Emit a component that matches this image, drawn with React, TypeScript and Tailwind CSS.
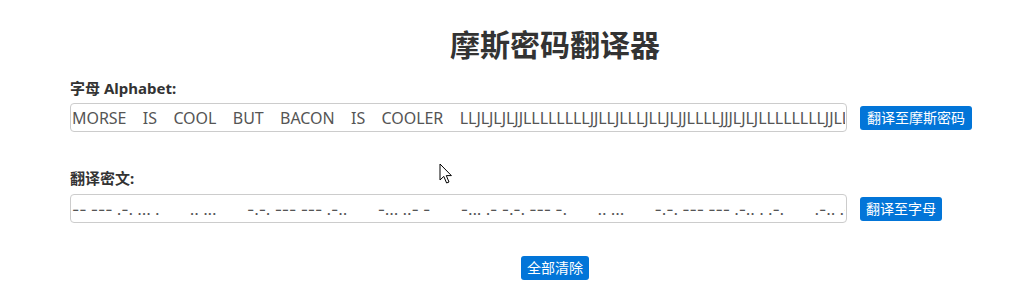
import React, { useState } from 'react';

const LETTERS =
  'MORSE    IS    COOL    BUT    BACON    IS    COOLER    LLJLJLJLJJLLLLLLLLJJLLJLLLJLLJLJJLLLLJJJLJLJLLLLLLLLJJLLJLLLJLLJLJJLLLL';

const MORSE =
  '-- --- .-. ... .       .. ...       -.-. --- --- .-..       -... ..- -       -... .- -.-. --- -.       .. ...       -.-. --- --- .-.. . .-.       .-.. .-.. .--- .-.. .--- .-.. .--- .-..';

const font = { fontFamily: '"Noto Sans", "Noto Sans CJK SC", sans-serif' };
const morseFont = { fontFamily: 'Inter, "Noto Sans", sans-serif' };

const Cursor: React.FC = () => (
  <svg className="absolute left-[439px] top-[163px]" width="14" height="22" viewBox="0 0 14 22">
    <path
      d="M1 1 L1 17 L4.8 13.4 L7.6 20 L10 19 L7.3 12.6 L12.4 12.6 Z"
      fill="#fff"
      stroke="#000"
      strokeWidth="1"
      strokeLinejoin="round"
    />
  </svg>
);

const App: React.FC = () => {
  const [letters, setLetters] = useState(LETTERS);
  const [morse, setMorse] = useState(MORSE);

  return (
    <div className="relative h-[295px] w-[1036px] bg-white text-[#333]" style={font}>
      <div className="pl-[70px]">
        <h1 className="pl-[4px] pt-[25px] text-center text-[30px] font-bold leading-[40px]">摩斯密码翻译器</h1>

        {/* alphabet row */}
        <label className="mt-[13px] block text-[15px] font-bold leading-[20px]">字母 Alphabet:</label>
        <div className="mt-[5px] flex items-center gap-[13px]">
          <input
            className="h-[29px] w-[777px] rounded-[4px] border border-[#ccc] px-[1px] text-[16px] tracking-[-0.05px] text-[#555] outline-none"
            value={letters}
            onChange={e => setLetters(e.target.value)}
          />
          <button className="h-[24px] rounded-[3px] bg-[#0275d8] px-[7px] text-[14px] leading-[24px] text-white">
            翻译至摩斯密码
          </button>
        </div>

        {/* morse row */}
        <label className="mt-[36px] block text-[15px] font-bold leading-[20px]">翻译密文:</label>
        <div className="mt-[6px] flex items-center gap-[13px]">
          <input
            className="h-[29px] w-[777px] rounded-[4px] border border-[#ccc] px-[1px] pt-[1px] text-[16px] tracking-[-0.15px] text-[#555] outline-none"
            style={morseFont}
            value={morse}
            onChange={e => setMorse(e.target.value)}
          />
          <button className="h-[24px] rounded-[3px] bg-[#0275d8] px-[6px] text-[14px] leading-[24px] text-white">
            翻译至字母
          </button>
        </div>

        <div className="mt-[33px] flex justify-center pl-[4px]">
          <button
            className="h-[24px] rounded-[3px] bg-[#0275d8] px-[6px] text-[14px] leading-[24px] text-white"
            onClick={() => {
              setLetters('');
              setMorse('');
            }}
          >
            全部清除
          </button>
        </div>
      </div>
      <Cursor />
    </div>
  );
};

export default App;
